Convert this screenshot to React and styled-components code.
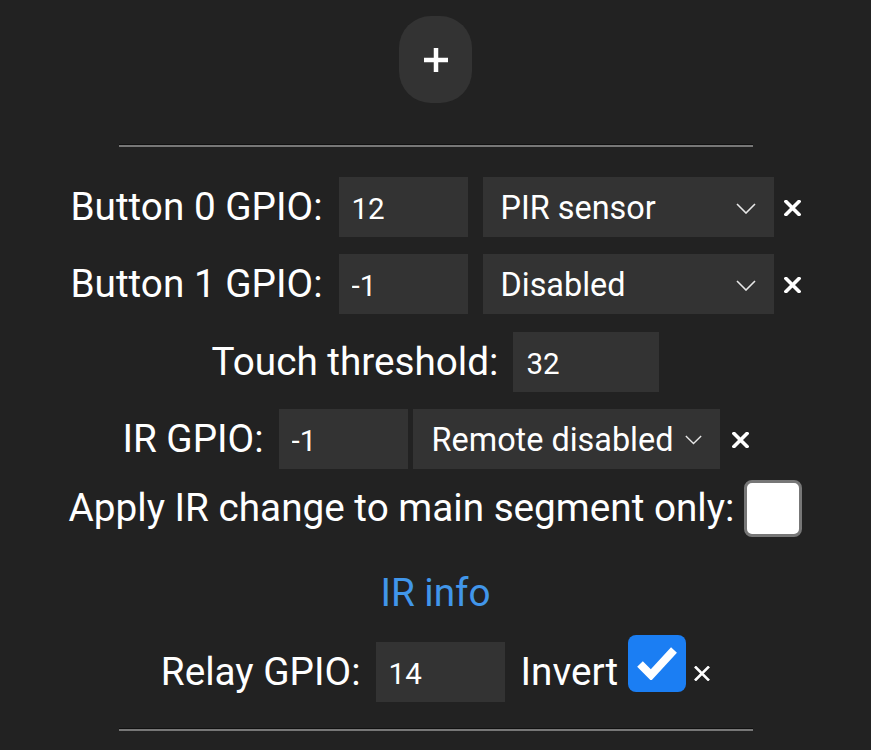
import React from 'react'
import styled, { createGlobalStyle } from 'styled-components'

const GlobalStyle = createGlobalStyle`
  html, body {
    margin: 0;
    padding: 0;
    background: #222;
  }
  body {
    font-family: Roboto, "Liberation Sans", sans-serif;
    color: #fff;
  }
`

const Page = styled.div`
  display: flex;
  flex-direction: column;
  align-items: center;
  padding-top: 16px;
  min-height: 750px;
  box-sizing: border-box;
  background: #222;
`

const AddButton = styled.button`
  width: 73px;
  height: 87px;
  border: 0;
  border-radius: 32px;
  background: #333;
  display: flex;
  align-items: center;
  justify-content: center;
  padding: 0;
  cursor: pointer;
`

const Divider = styled.hr`
  width: 634px;
  height: 0;
  margin: ${p => p.top}px 0 0;
  border: 0;
  border-top: 1px solid #111;
  border-bottom: 2px solid #777;
`

const Row = styled.div`
  display: flex;
  align-items: center;
  justify-content: center;
  height: ${p => p.h || 60}px;
  margin-top: ${p => p.mt || 0}px;
`

const Label = styled.span`
  font-size: 38.7px;
  line-height: 1;
  margin-right: ${p => p.gap ?? 15}px;
  white-space: nowrap;
`

const NumInput = styled.input`
  width: ${p => p.w || 129}px;
  height: 60px;
  box-sizing: border-box;
  border: 0;
  outline: none;
  background: #333;
  color: #fff;
  font-family: inherit;
  font-size: 29.5px;
  padding: 4px 0 0 ${p => p.pl || 13}px;
  margin-right: ${p => p.mr || 0}px;
`

const SelectBox = styled.div`
  width: ${p => p.w}px;
  height: 60px;
  box-sizing: border-box;
  background: #333;
  display: flex;
  align-items: center;
  justify-content: space-between;
  padding: 2px ${p => p.pr}px 0 ${p => p.pl}px;
  font-size: 32.4px;
  white-space: nowrap;
`

const Remove = styled.span`
  display: inline-flex;
  margin-left: ${p => p.ml}px;
  margin-top: 2px;
`

const CheckBox = styled.span`
  width: 58px;
  height: 57px;
  box-sizing: border-box;
  border-radius: 8px;
  display: inline-flex;
  align-items: center;
  justify-content: center;
  background: ${p => (p.checked ? '#1b7ef3' : '#fff')};
  border: ${p => (p.checked ? '0' : '3px solid #777')};
  margin-left: ${p => p.ml}px;
  margin-bottom: ${p => p.mb || 0}px;
`

const InfoLink = styled.a`
  color: #4196ea;
  font-size: 38.7px;
  text-decoration: none;
  line-height: 1;
`

const Chevron = ({ w = 20 }) => (
  <svg width={w} height={w / 2 + 1} viewBox="0 0 20 11" fill="none">
    <polyline points="1,1 10,10 19,1" stroke="#e8e8e8" strokeWidth="1.6" />
  </svg>
)

const Cross = ({ size = 17, sw = 3.6 }) => (
  <svg width={size} height={size - 1} viewBox="0 0 17 16">
    <path d="M2 1.5 L15 14.5 M15 1.5 L2 14.5" stroke="#fff" strokeWidth={sw} strokeLinecap="square" />
  </svg>
)

const Plus = () => (
  <svg width="26" height="26" viewBox="0 0 26 26">
    <path d="M13 1 V25 M1 13 H25" stroke="#fff" strokeWidth="4.5" />
  </svg>
)

const Tick = () => (
  <svg width="42" height="34" viewBox="0 0 42 34" fill="none">
    <polyline points="4,18 15,29 38,4" stroke="#fff" strokeWidth="8" strokeLinejoin="miter" />
  </svg>
)

const App = () => {
  return (
    <Page>
      <GlobalStyle />
      <AddButton aria-label="add">
        <Plus />
      </AddButton>
      <Divider top={41} />

      <Row mt={30}>
        <Label gap={16}>Button 0 GPIO:</Label>
        <NumInput defaultValue="12" mr={15} />
        <SelectBox w={291} pl={18} pr={18}>
          PIR sensor <Chevron />
        </SelectBox>
        <Remove ml={10}><Cross /></Remove>
      </Row>

      <Row mt={17}>
        <Label gap={16}>Button 1 GPIO:</Label>
        <NumInput defaultValue="-1" mr={15} />
        <SelectBox w={291} pl={18} pr={18}>
          Disabled <Chevron />
        </SelectBox>
        <Remove ml={10}><Cross /></Remove>
      </Row>

      <Row mt={18}>
        <Label>Touch threshold:</Label>
        <NumInput defaultValue="32" w={146} />
      </Row>

      <Row mt={17}>
        <Label>IR GPIO:</Label>
        <NumInput defaultValue="-1" mr={5} />
        <SelectBox w={307} pl={19} pr={18}>
          Remote disabled <Chevron w={17} />
        </SelectBox>
        <Remove ml={12}><Cross /></Remove>
      </Row>

      <Row mt={11} h={57}>
        <Label gap={10}>Apply IR change to main segment only:</Label>
        <CheckBox ml={0} />
      </Row>

      <Row mt={36} h={40}>
        <InfoLink href="#">IR info</InfoLink>
      </Row>

      <Row mt={29}>
        <Label>Relay GPIO:</Label>
        <NumInput defaultValue="14" mr={16} />
        <Label gap={10}>Invert</Label>
        <CheckBox checked ml={0} mb={18}>
          <Tick />
        </CheckBox>
        <Remove ml={8}><Cross size={16} sw={2.8} /></Remove>
      </Row>

      <Divider top={26} />
    </Page>
  )
}

export default App
